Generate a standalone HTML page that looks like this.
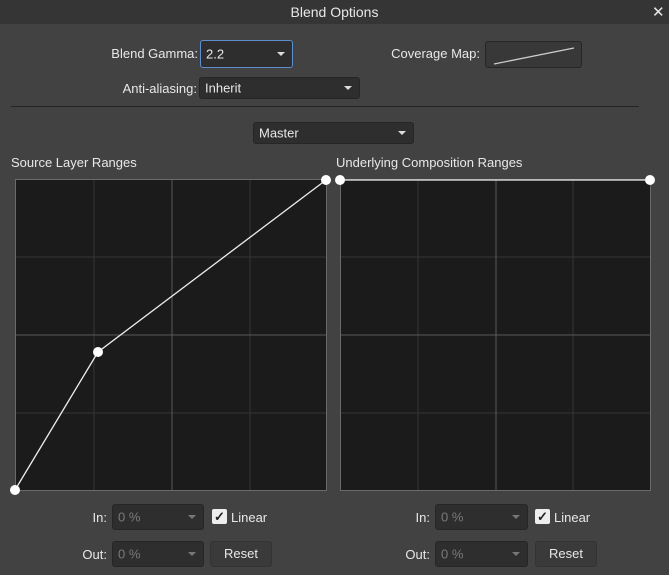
<!DOCTYPE html>
<html><head><style>
body{margin:0;width:669px;height:575px;background:#424242;font-family:"Liberation Sans",sans-serif;font-size:13px;color:#e8e8e8;position:relative;overflow:hidden}
.a{position:absolute}
.t{position:absolute;white-space:nowrap}
.dd{position:absolute;background:#2e2e2e;border:1px solid #262626;border-radius:3px;box-sizing:border-box}
.dd span{position:absolute;left:5px;top:50%;transform:translateY(-50%)}
.dd i{position:absolute;right:7px;top:50%;margin-top:-2px;border-left:4px solid transparent;border-right:4px solid transparent;border-top:4px solid #ddd}
.dis span{color:#7a7a7a}.dis i{border-top-color:#777}
.btn{position:absolute;background:#3a3a3a;border:1px solid #333;border-radius:3px;box-sizing:border-box;text-align:center}
.cb{position:absolute;width:15px;height:15px;background:#eee;border-radius:2px;color:#222;font-size:13px;line-height:15px;text-align:center;font-weight:bold}
</style></head><body>
<div class="a" style="left:0;top:0;width:669px;height:24px;background:#353535"></div>
<div class="t" style="left:0;width:669px;text-align:center;top:4px;font-size:14px">Blend Options</div>
<div class="t" style="left:652px;top:3px;font-size:15px">✕</div>

<div class="t" style="right:471px;top:46px">Blend Gamma:</div>
<div class="dd" style="left:200px;top:40px;width:93px;height:28px;border-color:#5b8fd0"><span>2.2</span><i></i></div>
<div class="t" style="right:189px;top:46px">Coverage Map:</div>
<div class="dd" style="left:485px;top:41px;width:97px;height:27px;background:#383838">
<svg class="a" style="left:0;top:0" width="97" height="27"><line x1="8" y1="22" x2="88" y2="6" stroke="#ccc" stroke-width="1.3"/></svg></div>
<div class="t" style="right:472px;top:81px">Anti-aliasing:</div>
<div class="dd" style="left:199px;top:77px;width:161px;height:22px"><span>Inherit</span><i></i></div>
<div class="a" style="left:11px;top:106px;width:628px;height:1px;background:#242424"></div>
<div class="dd" style="left:253px;top:122px;width:161px;height:22px"><span>Master</span><i></i></div>
<div class="t" style="left:11px;top:155px">Source Layer Ranges</div>
<div class="t" style="left:336px;top:155px">Underlying Composition Ranges</div>

<svg class="a" style="left:0;top:0" width="669" height="575">
<g fill="#1b1b1b" stroke="#6a6a6a"><rect x="15.5" y="179.5" width="311" height="311"/><rect x="340.5" y="179.5" width="310" height="311"/></g>
<g stroke="#353535"><path d="M94 180V490M250 180V490M16 257H326M16 413H326M418 180V490M573 180V490M341 257H650M341 413H650"/></g>
<g stroke="#5a5a5a"><path d="M172 180V490M16 335H326M496 180V490M341 335H650"/></g>
<g stroke="#eee" stroke-width="1.3" fill="none"><polyline points="15,490 98,352 326,180"/><line x1="340" y1="180" x2="650" y2="180"/></g>
<g fill="#fff"><circle cx="15" cy="490" r="5"/><circle cx="98" cy="352" r="5"/><circle cx="326" cy="180" r="5"/><circle cx="340" cy="180" r="5"/><circle cx="650" cy="180" r="5"/></g>
</svg>

<div class="t" style="right:562px;top:510px">In:</div>
<div class="dd dis" style="left:112px;top:504px;width:92px;height:26px"><span>0 %</span><i></i></div>
<div class="cb" style="left:212px;top:509px">✓</div>
<div class="t" style="left:231px;top:510px">Linear</div>
<div class="t" style="right:562px;top:547px">Out:</div>
<div class="dd dis" style="left:112px;top:541px;width:92px;height:26px"><span>0 %</span><i></i></div>
<div class="btn" style="left:210px;top:541px;width:62px;height:26px;line-height:24px">Reset</div>

<div class="t" style="right:239px;top:510px">In:</div>
<div class="dd dis" style="left:435px;top:504px;width:93px;height:26px"><span>0 %</span><i></i></div>
<div class="cb" style="left:535px;top:509px">✓</div>
<div class="t" style="left:554px;top:510px">Linear</div>
<div class="t" style="right:239px;top:547px">Out:</div>
<div class="dd dis" style="left:435px;top:541px;width:93px;height:26px"><span>0 %</span><i></i></div>
<div class="btn" style="left:535px;top:541px;width:62px;height:26px;line-height:24px">Reset</div>
</body></html>
